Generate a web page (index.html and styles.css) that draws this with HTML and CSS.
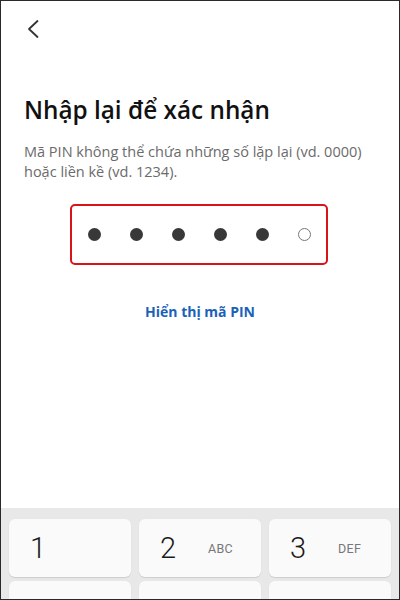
FILE: index.html
```html
<!DOCTYPE html>
<html lang="vi">
<head>
<meta charset="utf-8">
<link rel="stylesheet" href="styles.css">
</head>
<body>
<div class="screen">
  <div class="content">
    <div class="topbar">
      <svg class="back" width="14" height="20" viewBox="0 0 14 20"><path d="M11.5 2 L3 10 L11.5 18" fill="none" stroke="#333" stroke-width="1.8" stroke-linecap="round" stroke-linejoin="round"/></svg>
    </div>
    <h1 class="title">Nhập lại để xác nhận</h1>
    <p class="desc">Mã PIN không thể chứa những số lặp lại (vd. 0000) hoặc liền kề (vd. 1234).</p>
    <div class="pinbox">
      <span class="dot"></span><span class="dot"></span><span class="dot"></span><span class="dot"></span><span class="dot"></span><span class="dot empty"></span>
    </div>
    <div class="show">Hiển thị mã PIN</div>
  </div>
  <div class="keyboard">
    <div class="key"><span class="num">1</span><span class="letters"></span></div>
    <div class="key"><span class="num">2</span><span class="letters">ABC</span></div>
    <div class="key"><span class="num">3</span><span class="letters">DEF</span></div>
    <div class="key"></div>
    <div class="key"></div>
    <div class="key"></div>
  </div>
</div>
</body>
</html>
```
FILE: styles.css
```css
html, body { margin: 0; padding: 0; background: #fff; }
.screen {
  width: 400px; height: 600px; box-sizing: border-box;
  border: 1px solid #2a2a2a;
  display: flex; flex-direction: column; overflow: hidden;
  font-family: "Open Sans", "Noto Sans", sans-serif;
  background: #fff;
}
.content { flex: 1; display: flex; flex-direction: column; padding: 0 23px; }
.topbar { height: 70px; padding-top: 18px; box-sizing: border-box; }
.back { display: block; margin-left: 2px; }
.title {
  margin: 23px 0 0; font-size: 24.3px; line-height: 32px; font-weight: 600; color: #111;
  letter-spacing: 0;
}
.desc {
  margin: 16px 0 0; font-size: 14.5px; line-height: 20px; color: #6b6b6b; letter-spacing: 0;
}
.pinbox {
  margin: 22px 0 0 46px; width: 258px; height: 61px; box-sizing: border-box;
  border: 2.5px solid #d9131a; border-radius: 5px;
  display: flex; align-items: center; justify-content: space-between;
  padding: 0 15.5px;
}
.dot { width: 13px; height: 13px; border-radius: 50%; background: #383838; display: block; }
.dot.empty { background: #fff; border: 1.3px solid #777; box-sizing: border-box; width: 13px; height: 13px; }
.show {
  margin-top: 37px; text-align: center; font-size: 14px; font-weight: 700; color: #1a62b8;
}
.keyboard {
  height: 91px; background: #e8e8e8; box-sizing: border-box;
  padding: 11px 8px 0 8px;
  display: grid; grid-template-columns: repeat(3, 1fr); column-gap: 8px; row-gap: 4px;
  grid-auto-rows: 58px;
}
.key {
  background: #fafafa; border-radius: 6px;
  box-shadow: 0 1px 1px rgba(0,0,0,0.12);
  display: flex; align-items: center;
  font-family: "Roboto", "Noto Sans", sans-serif;
}
.num { font-size: 29px; color: #1a1a1a; font-weight: 300; margin-left: 21px; width: 30px; }
.letters { font-size: 12.5px; color: #777; margin-left: 18px; letter-spacing: 0.3px; }
```
